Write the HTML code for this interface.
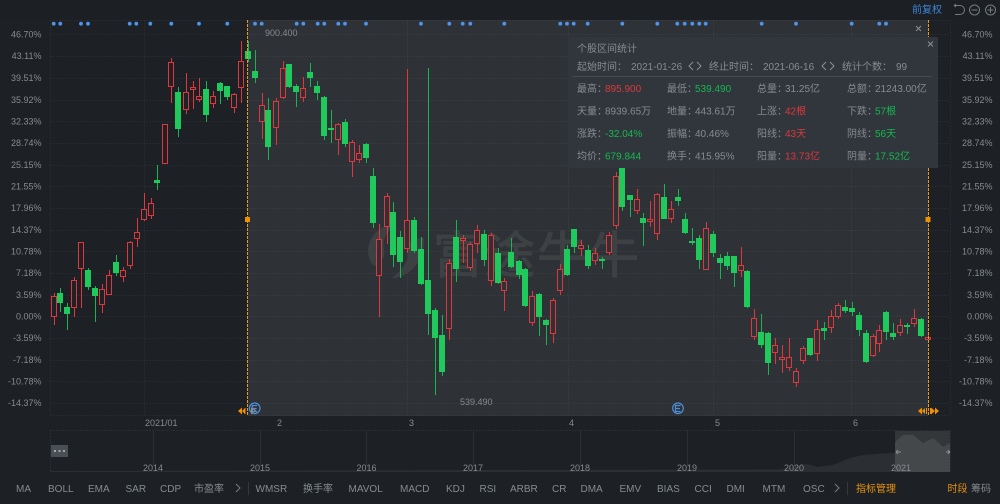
<!DOCTYPE html>
<html><head><meta charset="utf-8"><style>
html,body{margin:0;padding:0;background:#1d2125;width:1000px;height:504px;overflow:hidden}
svg{display:block;position:absolute;left:0;top:0;filter:blur(.3px)}
text{font-family:"Liberation Sans","Noto Sans CJK SC",sans-serif;font-size:10px;fill:#868b91}
.a text{font-size:9px;fill:#868b91}
.r{fill:#dc383d!important}.g{fill:#14b850!important}.o{fill:#e8910c!important}
</style></head><body>
<svg width="1000" height="504" viewBox="0 0 1000 504">
<rect width="1000" height="504" fill="#1d2125"/>
<rect x="0" y="0" width="1000" height="20" fill="#1c2024"/>
<rect x="248" y="20" width="680" height="396" fill="#2e3135"/>
<!-- grid -->
<g stroke="#ffffff" stroke-opacity=".045" stroke-width="1" fill="none" stroke-dasharray="2 1">
<path d="M50 20.5H950M50 34.5H950M50 56.5H950M50 78.5H950M50 100.5H950M50 121.5H950M50 143.5H950M50 165.5H950M50 186.5H950M50 208.5H950M50 230.5H950M50 251.5H950M50 273.5H950M50 295.5H950M50 316.5H950M50 338.5H950M50 360.5H950M50 381.5H950M50 403.5H950M50 415.5H950"/>
<path d="M50.5 20V416M144.5 20V416M407.5 20V416M568.5 20V416M713.5 20V416M851.5 20V416M950.5 20V416"/>
</g>
<!-- watermark -->
<g fill="#3e4144">
<path d="M368 250C369 235 382 224 396 224C386 232 382 240 384 250C386 258 380 264 374 266C370 262 368 256 368 250ZM424 238C426 256 412 278 392 278C402 270 409 262 408 250C407 243 412 238 424 238Z"/>
<text x="433" y="273" style="font-size:50px;fill:#3e4144;stroke:#3e4144;stroke-width:1;letter-spacing:2px">富途牛牛</text>
</g>
<!-- wicks -->
<path fill="none" stroke="#dc383d" stroke-width="1" d="M54.5 293V325M74.5 277V317M81.5 242V308M102.5 284V313M109.5 270V295M123.5 267V282M130.5 241V269M137.5 218V247M144.5 193V221M151.5 198V219M165.5 124V164M171.5 58V103M186.5 73V114M193.5 81V109M199.5 78V102M213.5 91V108M234.5 93V113M241.5 41V103M262.5 93V139M276.5 98V145M283.5 61V99M303.5 77V102M338.5 123V155M352.5 140V177M359.5 145V163M379.5 224V317M387.5 193V244M407.5 69V253M449.5 259V340M463.5 235V263M470.5 242V271M477.5 225V253M491.5 233V286M504.5 278V311M532.5 291V326M553.5 298V343M560.5 264V295M581.5 240V256M595.5 248V265M609.5 232V255M616.5 172V229M637.5 189V214M650.5 201V227M657.5 193V240M671.5 201V223M706.5 222V270M741.5 247V277M754.5 309V340M775.5 338V364M782.5 345V373M789.5 338V371M796.5 368V387M803.5 346V364M817.5 320V361M831.5 310V333M838.5 303V319M873.5 334V357M879.5 325V352M900.5 319V336M914.5 309V327M928.5 335V341"/>
<path fill="none" stroke="#17b552" stroke-width="1" d="M60.5 288V312M67.5 303V330M88.5 268V290M95.5 286V322M116.5 255V276M157.5 165V190M178.5 87V137M206.5 81V122M220.5 82V104M227.5 86V100M248.5 41V62M255.5 50V83M268.5 98V160M289.5 64V88M296.5 84V107M310.5 63V87M317.5 81V100M324.5 96V140M331.5 110V143M345.5 119V147M366.5 143V163M373.5 168V228M393.5 202V267M400.5 231V278M414.5 217V253M421.5 237V285M428.5 68V335M435.5 308V395M442.5 315V376M456.5 220V282M484.5 230V266M498.5 248V284M511.5 238V268M519.5 260V279M525.5 268V307M539.5 293V336M546.5 319V345M567.5 245V276M574.5 229V253M588.5 245V269M602.5 257V269M622.5 168V211M630.5 195V217M643.5 213V246M664.5 184V219M678.5 189V206M685.5 213V234M692.5 228V245M699.5 235V269M713.5 231V257M720.5 254V279M727.5 252V270M734.5 256V287M747.5 270V308M761.5 314V348M768.5 332V375M810.5 338V356M824.5 322V340M845.5 300V313M852.5 302V316M859.5 312V336M866.5 330V363M886.5 311V340M893.5 323V340M907.5 323V334M921.5 318V337"/>
<!-- green bodies -->
<path fill="none" stroke="#1fc95c" stroke-width="6" d="M60 293V303M67 307V314M88 270V287M95 288V296M116 262V273M157 180V183M178 92V129M206 89V115M220 83V91M227 86V97M248 51V59M255 71V78M268 110V147M289 64V87M296 86V92M310 72V78M317 86V93M324 97V136M331 128V130M345 122V144M366 144V158M373 176V223M393 212V255M400 237V262M414 220V251M421 249V284M428 280V314M435 310V338M442 335V372M456 237V269M484 234V260M498 253V283M511 252V267M519 261V275M525 269V306M539 294V317M546 320V325M567 249V275M574 229V247M588 250V266M602 259V261M622 168V207M630 195V200M643 218V223M664 197V219M678 197V201M685 219V233M692 241V243M699 238V260M713 234V253M720 258V263M727 256V266M734 256V273M747 271V307M761 332V345M768 333V363M810 338V355M824 328V331M845 307V311M852 308V312M859 315V330M866 333V362M886 312V332M893 333V337M907 325V327M921 319V336"/>
<!-- red bodies, dark area -->
<path fill="#1e2226" stroke="#dc383d" stroke-width="1" d="M51.5 296.5h5V316.5h-5zM71.5 280.5h5V307.5h-5zM78.5 242.5h5V268.5h-5zM99.5 289.5h5V304.5h-5zM106.5 275.5h5V294.5h-5zM120.5 270.5h5V276.5h-5zM127.5 242.5h5V265.5h-5zM134.5 232.5h5V238.5h-5zM141.5 209.5h5V219.5h-5zM148.5 203.5h5V215.5h-5zM162.5 124.5h5V163.5h-5zM168.5 62.5h5V86.5h-5zM183.5 92.5h5V109.5h-5zM190.5 87.5h5V89.5h-5zM196.5 96.5h5V99.5h-5zM210.5 96.5h5V103.5h-5zM231.5 94.5h5V107.5h-5zM238.5 61.5h5V87.5h-5z"/>
<!-- red bodies, selected area -->
<path fill="#2e3135" stroke="#dc383d" stroke-width="1" d="M259.5 105.5h5V121.5h-5zM273.5 101.5h5V127.5h-5zM280.5 68.5h5V97.5h-5zM300.5 88.5h5V97.5h-5zM335.5 124.5h5V139.5h-5zM349.5 142.5h5V161.5h-5zM356.5 153.5h5V159.5h-5zM376.5 239.5h5V275.5h-5zM384.5 196.5h5V226.5h-5zM404.5 220.5h5V248.5h-5zM446.5 263.5h5V328.5h-5zM460.5 238.5h5V240.5h-5zM467.5 244.5h5V267.5h-5zM474.5 230.5h5V243.5h-5zM488.5 235.5h5V280.5h-5zM501.5 281.5h5V290.5h-5zM529.5 296.5h5V322.5h-5zM550.5 300.5h5V333.5h-5zM557.5 269.5h5V290.5h-5zM578.5 245.5h5V248.5h-5zM592.5 253.5h5V260.5h-5zM606.5 235.5h5V252.5h-5zM613.5 176.5h5V225.5h-5zM634.5 199.5h5V210.5h-5zM647.5 219.5h5V221.5h-5zM654.5 194.5h5V233.5h-5zM668.5 209.5h5V218.5h-5zM703.5 228.5h5V269.5h-5zM738.5 265.5h5V270.5h-5zM751.5 318.5h5V336.5h-5zM772.5 345.5h5V352.5h-5zM779.5 357.5h5V359.5h-5zM786.5 357.5h5V367.5h-5zM793.5 371.5h5V382.5h-5zM800.5 348.5h5V360.5h-5zM814.5 329.5h5V353.5h-5zM828.5 316.5h5V327.5h-5zM835.5 305.5h5V316.5h-5zM870.5 336.5h5V355.5h-5zM876.5 330.5h5V343.5h-5zM897.5 325.5h5V332.5h-5zM911.5 318.5h5V323.5h-5zM925.5 337.5h5V339.5h-5z"/>
<!-- selection lines -->
<path d="M247.5 20V416M928.5 20V416" stroke="#e59a1c" stroke-width="1" stroke-dasharray="3 1" fill="none"/>
<rect x="245" y="217" width="5" height="5" fill="#ee9000"/>
<rect x="925.5" y="217" width="5" height="5" fill="#ee9000"/>
<!-- blue dots -->
<g fill="#4d94ee">
<circle cx="53.7" cy="23.7" r="1.9"/><circle cx="60.3" cy="23.7" r="1.9"/><circle cx="81" cy="23.7" r="1.9"/><circle cx="88" cy="23.7" r="1.9"/><circle cx="129.7" cy="23.7" r="1.9"/><circle cx="136.3" cy="23.7" r="1.9"/><circle cx="150.3" cy="23.7" r="1.9"/><circle cx="171.3" cy="23.7" r="1.9"/><circle cx="199" cy="23.7" r="1.9"/><circle cx="227.3" cy="23.7" r="1.9"/><circle cx="255" cy="23.7" r="1.9"/><circle cx="261.7" cy="23.7" r="1.9"/><circle cx="296.7" cy="23.7" r="1.9"/><circle cx="303.3" cy="23.7" r="1.9"/><circle cx="317.7" cy="23.7" r="1.9"/><circle cx="324.3" cy="23.7" r="1.9"/><circle cx="338.3" cy="23.7" r="1.9"/><circle cx="345" cy="23.7" r="1.9"/><circle cx="366" cy="23.7" r="1.9"/><circle cx="421" cy="23.7" r="1.9"/><circle cx="449.3" cy="23.7" r="1.9"/><circle cx="462.7" cy="23.7" r="1.9"/><circle cx="470.3" cy="23.7" r="1.9"/><circle cx="504.3" cy="23.7" r="1.9"/><circle cx="560.3" cy="23.7" r="1.9"/><circle cx="567" cy="23.7" r="1.9"/><circle cx="573.7" cy="23.7" r="1.9"/><circle cx="587.7" cy="23.7" r="1.9"/><circle cx="622.3" cy="23.7" r="1.9"/><circle cx="657.3" cy="23.7" r="1.9"/><circle cx="677.3" cy="23.7" r="1.9"/><circle cx="684.7" cy="23.7" r="1.9"/><circle cx="692.3" cy="23.7" r="1.9"/><circle cx="699.3" cy="23.7" r="1.9"/><circle cx="705.7" cy="23.7" r="1.9"/><circle cx="761.7" cy="23.7" r="1.9"/><circle cx="796" cy="23.7" r="1.9"/><circle cx="851.7" cy="23.7" r="1.9"/><circle cx="879.3" cy="23.7" r="1.9"/><circle cx="886" cy="23.7" r="1.9"/>
</g>
<!-- axis labels -->
<g class="a">
<g text-anchor="end">
<text x="41.5" y="37.5">46.70%</text><text x="41.5" y="59">43.11%</text><text x="41.5" y="81">39.51%</text><text x="41.5" y="103">35.92%</text><text x="41.5" y="124.5">32.33%</text><text x="41.5" y="146">28.74%</text><text x="41.5" y="168">25.15%</text><text x="41.5" y="189.5">21.55%</text><text x="41.5" y="211">17.96%</text><text x="41.5" y="233">14.37%</text><text x="41.5" y="254.5">10.78%</text><text x="41.5" y="276">7.18%</text><text x="41.5" y="298">3.59%</text><text x="41.5" y="319.5">0.00%</text><text x="41.5" y="341">-3.59%</text><text x="41.5" y="363">-7.18%</text><text x="41.5" y="384.5">-10.78%</text><text x="41.5" y="406">-14.37%</text>
</g>
<g text-anchor="end">
<text x="992.5" y="37.5">46.70%</text><text x="992.5" y="59">43.11%</text><text x="992.5" y="81">39.51%</text><text x="992.5" y="103">35.92%</text><text x="992.5" y="124.5">32.33%</text><text x="992.5" y="146">28.74%</text><text x="992.5" y="168">25.15%</text><text x="992.5" y="189.5">21.55%</text><text x="992.5" y="211">17.96%</text><text x="992.5" y="233">14.37%</text><text x="992.5" y="254.5">10.78%</text><text x="992.5" y="276">7.18%</text><text x="992.5" y="298">3.59%</text><text x="992.5" y="319.5">0.00%</text><text x="992.5" y="341">-3.59%</text><text x="992.5" y="363">-7.18%</text><text x="992.5" y="384.5">-10.78%</text><text x="992.5" y="406">-14.37%</text>
</g>
<text x="265" y="36">900.400</text>
<text x="460" y="405">539.490</text>
<text x="145" y="426">2021/01</text><text x="277" y="426">2</text><text x="409" y="426">3</text><text x="569" y="426">4</text><text x="715" y="426">5</text><text x="853" y="426">6</text>
</g>
<!-- handles -->
<g fill="#ee9000">
<path d="M238 411l4-3.500v7zM242 411l3-3v6z"/><path d="M251 408l4 3.500-4 3.500zM256 411l-3-3v6z" transform="translate(0,-0.500)"/>
<path d="M918 411l4-3.500v7zM922 411l3-3v6z"/><path d="M931 407.500v7l4-3.500zM935 407.500v7l4-3.500z"/>
<rect x="926" y="408" width="1" height="6"/><rect x="930" y="408" width="1" height="6"/><rect x="244.500" y="408" width="1" height="6"/>
</g>
<g fill="none" stroke="#4d8fdc" stroke-width="1.200">
<circle cx="254.700" cy="408.300" r="5.300"/><circle cx="678" cy="408.300" r="5.300"/>
<path d="M680.500 405.500h-5v6h5M675.500 408.500h4.500M257.200 405.500h-5v6h5M252.200 408.500h4.500"/>
</g>
<!-- navigator -->
<path d="M50 430.500H950M50 471.500H950M50.500 430V472M950.500 430V472" stroke="#292d31" fill="none" stroke-dasharray="2 1"/>
<path d="M153.500 431V466M260.500 431V466M366.500 431V466M473.500 431V466M580.500 431V466M687.500 431V466M794.500 431V466" stroke="#2c3035" fill="none"/>
<rect x="895" y="431" width="55" height="41" fill="#33373a"/>
<path d="M50 471L780 469.500L807 464L817 467L833 465L850 458L863 455L890 453L895 453V472H50Z" fill="#2b2f33"/>
<path d="M895 472V443L897 440L903 435L913 435L923 443L933 438L943 447L950 443V472Z" fill="#44484a"/>
<rect x="51" y="445" width="17" height="12" fill="#4a4f56"/>
<g fill="#a2a6ab"><rect x="54" y="450" width="2" height="2"/><rect x="58.500" y="450" width="2" height="2"/><rect x="63" y="450" width="2" height="2"/></g>
<path d="M896 452h5M896 452l2-2M896 452l2 2M946 452h4M950 452l-2-2M950 452l-2 2" stroke="#8a8f95" fill="none"/>
<g class="a">
<text x="143" y="471">2014</text><text x="250" y="471">2015</text><text x="356.500" y="471">2016</text><text x="463" y="471">2017</text><text x="570" y="471">2018</text><text x="677" y="471">2019</text><text x="784" y="471">2020</text><text x="891" y="471">2021</text>
</g>
<!-- tabs -->
<g>
<text x="16" y="492">MA</text><text x="48" y="492">BOLL</text><text x="88" y="492">EMA</text><text x="125.500" y="492">SAR</text><text x="160" y="492">CDP</text><text x="194" y="492">市盈率</text>
<text x="255.500" y="492">WMSR</text><text x="303" y="492">换手率</text><text x="348.500" y="492">MAVOL</text><text x="400" y="492">MACD</text><text x="446" y="492">KDJ</text><text x="479.500" y="492">RSI</text>
<text x="510" y="492">ARBR</text><text x="552" y="492">CR</text><text x="580.500" y="492">DMA</text><text x="619.500" y="492">EMV</text><text x="657" y="492">BIAS</text><text x="694.500" y="492">CCI</text><text x="726.500" y="492">DMI</text><text x="762.500" y="492">MTM</text><text x="803" y="492">OSC</text>
<text x="856" y="492" class="o">指标管理</text><text x="947.500" y="492" class="o">时段</text><text x="971" y="492">筹码</text>
</g>
<path d="M236 484l4 4-4 4M835 484l4 4-4 4" stroke="#777c82" fill="none"/>
<path d="M248.500 482V495M847.500 482V495" stroke="#33383d"/>
<!-- stats panel -->
<rect x="568" y="37" width="370" height="131" fill="#31363c"/>
<path d="M572 76.500H932" stroke="#454a50"/>
<text x="577" y="52">个股区间统计</text>
<text x="577" y="70">起始时间：</text><text x="631" y="70">2021-01-26</text>
<path d="M693 62l-4 4 4 4M697 62l4 4-4 4M826 62l-4 4 4 4M830 62l4 4-4 4" stroke="#8a8f95" fill="none"/>
<text x="709" y="70">终止时间：</text><text x="763" y="70">2021-06-16</text>
<text x="842" y="70">统计个数：</text><text x="896" y="70">99</text>
<text x="577" y="92">最高：</text><text x="605" y="92" class="r">895.900</text>
<text x="667" y="92">最低：</text><text x="695" y="92" class="g">539.490</text>
<text x="757" y="92">总量：</text><text x="785" y="92">31.25亿</text>
<text x="847" y="92">总额：</text><text x="875" y="92">21243.00亿</text>
<text x="577" y="114.500">天量：</text><text x="605" y="114.500">8939.65万</text>
<text x="667" y="114.500">地量：</text><text x="695" y="114.500">443.61万</text>
<text x="757" y="114.500">上涨：</text><text x="785" y="114.500" class="r">42根</text>
<text x="847" y="114.500">下跌：</text><text x="875" y="114.500" class="g">57根</text>
<text x="577" y="137">涨跌：</text><text x="605" y="137" class="g">-32.04%</text>
<text x="667" y="137">振幅：</text><text x="695" y="137">40.46%</text>
<text x="757" y="137">阳线：</text><text x="785" y="137" class="r">43天</text>
<text x="847" y="137">阴线：</text><text x="875" y="137" class="g">56天</text>
<text x="577" y="159.500">均价：</text><text x="605" y="159.500" class="g">679.844</text>
<text x="667" y="159.500">换手：</text><text x="695" y="159.500">415.95%</text>
<text x="757" y="159.500">阳量：</text><text x="785" y="159.500" class="r">13.73亿</text>
<text x="847" y="159.500">阴量：</text><text x="875" y="159.500" class="g">17.52亿</text>
<path d="M916 26l5 5M921 26l-5 5M928 41.500l5 5M933 41.500l-5 5" stroke="#8a8f95" fill="none"/>
<!-- top right -->
<text x="912" y="13" style="fill:#3f84d8">前复权</text>
<g stroke="#767b81" fill="none" stroke-width="1">
<path d="M954 5.500h6a4.500 4.500 0 0 1 0 9h-5M954 5.500l2-1.500M954 5.500l2 1.500"/>
<circle cx="974.500" cy="10" r="5"/><path d="M971.500 10h6"/>
<circle cx="990.500" cy="10" r="5"/><path d="M987.500 10h6M990.500 7v6"/>
</g>
</svg>
</body></html>
